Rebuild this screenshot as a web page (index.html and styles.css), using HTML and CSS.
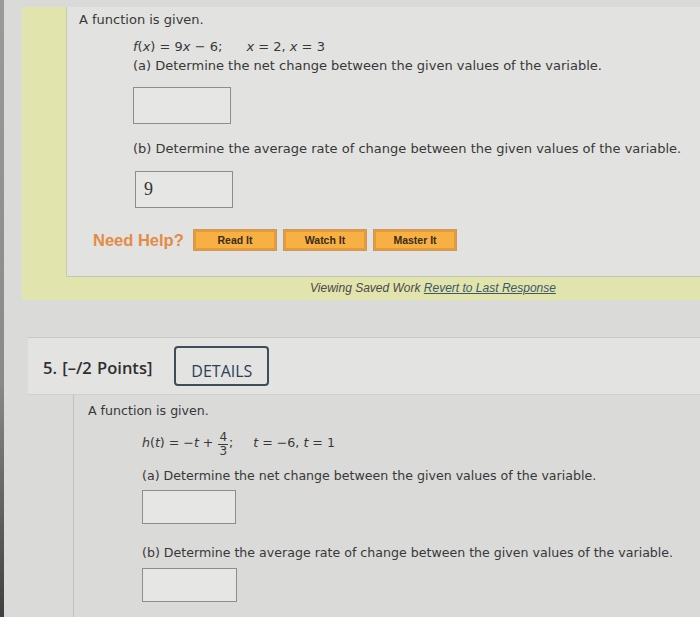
FILE: index.html
```html
<!DOCTYPE html>
<html>
<head>
<meta charset="utf-8">
<title>Question</title>
<link rel="stylesheet" href="styles.css">
</head>
<body>
<div class="page">
  <section class="q4">
    <div class="q4-inner">
      <p class="intro">A function is given.</p>
      <div class="indent">
        <p class="formula"><i>f</i>(<i>x</i>) = 9<i>x</i> − 6;<span class="sp"></span><i>x</i> = 2, <i>x</i> = 3</p>
        <p class="part">(a) Determine the net change between the given values of the variable.</p>
        <div class="answer"></div>
        <p class="part part-b">(b) Determine the average rate of change between the given values of the variable.</p>
        <div class="answer answer-filled">9</div>
      </div>
      <div class="help">
        <span class="need">Need Help?</span>
        <span class="btn">Read It</span>
        <span class="btn">Watch It</span>
        <span class="btn">Master It</span>
      </div>
    </div>
    <div class="saved"><i>Viewing Saved Work</i> <a class="revert">Revert to Last Response</a></div>
  </section>

  <section class="q5">
    <header class="q5-head">
      <span class="pts">5. [–/2 Points]</span>
      <span class="details">DETAILS</span>
    </header>
    <div class="q5-body">
      <p class="intro">A function is given.</p>
      <div class="indent">
        <p class="formula formula-h"><i>h</i>(<i>t</i>) = −<i>t</i> + <span class="frac"><span class="num">4</span><span class="den">3</span></span>;<span class="sp2"></span><i>t</i> = −6, <i>t</i> = 1</p>
        <p class="part part-a5">(a) Determine the net change between the given values of the variable.</p>
        <div class="answer answer-5a"></div>
        <p class="part part-b5">(b) Determine the average rate of change between the given values of the variable.</p>
        <div class="answer answer-5b"></div>
      </div>
    </div>
  </section>
</div>
</body>
</html>
```

FILE: styles.css
```css
html, body {
  margin: 0;
  padding: 0;
  height: 100%;
  overflow: hidden;
}
body {
  background: #dadad8;
  font-family: "DejaVu Sans", Verdana, sans-serif;
  font-size: 13px;
  color: #383838;
}
p { margin: 0; line-height: 16px; }
.page {
  border-left: 4px solid #8f8f8f;
  border-image: linear-gradient(#9a9a9a, #8a8a8a 60%, #3a3a3a) 1;
  min-height: 617px;
  box-sizing: border-box;
  padding-top: 7px;
}

/* Question 4 */
.q4 {
  margin-left: 18px;
  background: #e2e4ad;
  padding-left: 44px;
}
.q4-inner {
  background: #e2e2e0;
  border-left: 1px solid #c9caa8;
  border-bottom: 1px solid #c6c7b0;
  padding: 5px 0 26px 12px;
}
.indent { margin-left: 54px; }
.formula { margin-top: 11px; }
.sp { display: inline-block; width: 24px; }
.part { margin-top: 3px; }
.answer {
  width: 96px;
  height: 35px;
  border: 1px solid #8d8d8b;
  background: #e6e6e4;
  margin-top: 13px;
}
.part-b { margin-top: 17px; }
.answer-filled {
  margin-top: 14px;
  margin-left: 2px;
  font-family: "Liberation Serif", "Times New Roman", serif;
  font-size: 18px;
  line-height: 35px;
  padding-left: 8px;
  box-sizing: border-box;
  width: 98px;
  height: 37px;
  color: #333;
}
.help {
  display: flex;
  align-items: center;
  margin-top: 22px;
  margin-left: 14px;
  gap: 8px;
}
.need {
  font-family: "Liberation Sans", Arial, sans-serif;
  font-weight: bold;
  font-size: 16.5px;
  color: #e38b45;
  width: 93px;
}
.btn {
  width: 78px;
  height: 16px;
  box-sizing: content-box;
  background: #f6b043;
  border: 2px solid #e79a36;
  box-shadow: 0 0 0 1px #c49a6a;
  font-family: "Liberation Sans", Arial, sans-serif;
  font-weight: bold;
  font-size: 10.5px;
  line-height: 16px;
  text-align: center;
  color: #3a2c18;
}
.saved {
  height: 23px;
  line-height: 22px;
  padding-left: 244px;
  font-family: "Liberation Sans", Arial, sans-serif;
  font-size: 12px;
  color: #4a4a48;
}
.saved i { font-style: italic; }
.revert {
  font-style: italic;
  color: #3d5868;
  text-decoration: underline;
}

/* Question 5 */
.q5 { margin-left: 24px; margin-top: 37px; }
.q5-head {
  display: flex;
  align-items: center;
  height: 56px;
  background: #e3e3e1;
  border-top: 1px solid #c8c8c4;
  border-bottom: 1px solid #cfcfcb;
  padding-left: 15px;
  font-family: "Open Sans", "Noto Sans", sans-serif;
}
.pts {
  font-weight: 600;
  font-size: 16.5px;
  color: #2f2f2f;
  margin-top: 2px;
  word-spacing: 1px;
}
.details {
  margin-left: 22px;
  width: 91px;
  border: 2px solid #3f4c5a;
  border-radius: 4px;
  display: flex;
  align-items: center;
  justify-content: center;
  font-size: 16px;
  color: #2b3f58;
  padding-top: 10px;
  box-sizing: content-box;
  height: 26px;
  margin-top: -1px;
}
.q5-body {
  margin-left: 45px;
  border-left: 1px solid #c2c2be;
  padding: 8px 0 30px 14px;
  min-height: 200px;
  font-size: 12.6px;
}
.formula-h {
  margin-top: 11px;
  height: 26px;
  line-height: 26px;
}
.frac {
  display: inline-flex;
  flex-direction: column;
  align-items: center;
  vertical-align: middle;
  font-size: 12px;
  line-height: 12px;
  margin: 0 1px;
}
.frac .num { border-bottom: 1px solid #3a3a3a; padding: 0 1px 1px; }
.sp2 { display: inline-block; width: 20px; }
.part-a5 { margin-top: 12px; }
.answer-5a { width: 92px; height: 32px; margin-top: 6px; }
.part-b5 { margin-top: 21px; }
.answer-5b { width: 93px; height: 32px; margin-top: 7px; }
```
